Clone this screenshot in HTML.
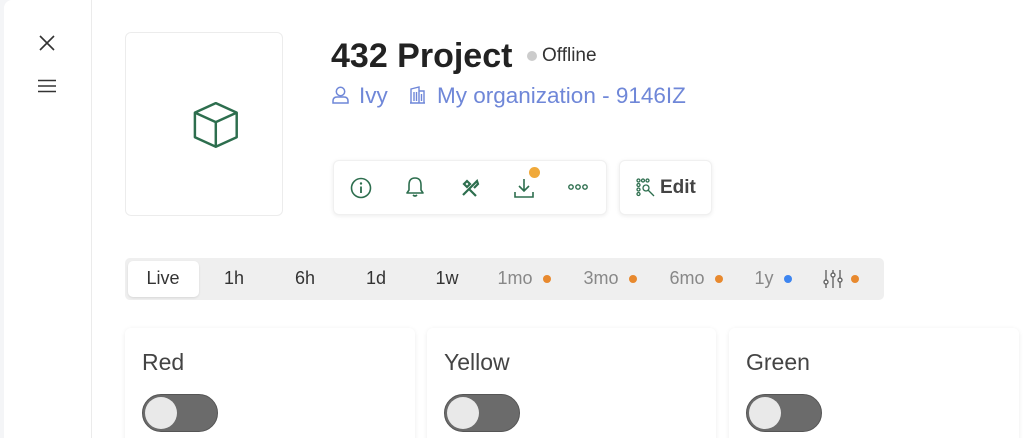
<!DOCTYPE html>
<html><head><style>
*{box-sizing:border-box;margin:0;padding:0}
html,body{width:1024px;height:438px;overflow:hidden}
body{background:#f4f5f7;font-family:"Liberation Sans",sans-serif;position:relative}
.side{position:absolute;left:4px;top:0;width:88px;height:438px;background:#fff;border-right:1px solid #ebebeb;border-top-left-radius:8px}
.main{position:absolute;left:92px;top:0;right:0;height:438px;background:#fff}
.abs{position:absolute}
.box{position:absolute;background:#fff;border:1px solid #ececec;border-radius:6px}
.shadow{box-shadow:0 1px 4px rgba(0,0,0,.08);border:1px solid #f0f0f0}
.tab{position:absolute;top:268px;font-size:18px;color:#333;transform:translateX(-50%)}
.tab.g{color:#888}
.dot{position:absolute;width:8px;height:8px;border-radius:50%;top:275px}
.card{position:absolute;top:328px;height:120px;background:#fff;border-radius:6px;box-shadow:0 1px 5px rgba(0,0,0,.08)}
.card .t{position:absolute;left:17px;top:21px;font-size:23px;color:#444}
.tg{position:absolute;left:17px;top:66px;width:76px;height:38px;border-radius:19px;background:#6b6b6b;border:1px solid #555}
.tg:after{content:"";position:absolute;left:2px;top:2px;width:32px;height:32px;border-radius:50%;background:#e9e9e9}
</style></head><body>
<div class="side">
<svg class="abs" style="left:34px;top:34px" width="18" height="18" viewBox="0 0 18 18"><path d="M2 2L16 16M16 2L2 16" stroke="#333" stroke-width="1.6"/></svg>
<svg class="abs" style="left:34px;top:79px" width="18" height="14" viewBox="0 0 18 14"><path d="M0 1.5H18M0 7H18M0 12.5H18" stroke="#333" stroke-width="1.6"/></svg>
</div>
<div class="main"></div>
<div class="box" style="left:125px;top:32px;width:158px;height:184px">
<svg class="abs" style="left:66px;top:69px" width="48" height="48" viewBox="0 0 48 48"><path d="M2 8L24 -2 46 8 46 34 24 44 2 34Z M2 8L24 18 46 8 M24 18V44" transform="translate(1,3) scale(0.95)" fill="none" stroke="#2d6e4e" stroke-width="2.6" stroke-linejoin="round"/></svg>
</div>
<div class="abs" style="left:331px;top:37px;font-size:34px;font-weight:bold;color:#222">432 Project</div>
<div class="abs" style="left:527px;top:51px;width:10px;height:10px;border-radius:50%;background:#ccc"></div>
<div class="abs" style="left:542px;top:45px;font-size:19px;color:#333">Offline</div>
<svg class="abs" style="left:332px;top:86px" width="17" height="18" viewBox="0 0 17 18"><circle cx="8.5" cy="5.5" r="4.2" fill="none" stroke="#6f87d8" stroke-width="1.5"/><path d="M1 17V15Q1 11 5 11H12Q16 11 16 15V17Z" fill="none" stroke="#6f87d8" stroke-width="1.5"/></svg>
<div class="abs" style="left:359px;top:83px;font-size:22.5px;color:#6f87d8">Ivy</div>
<svg class="abs" style="left:409px;top:86px" width="17" height="18" viewBox="0 0 17 18"><path d="M2 17V3L10 1V17M10 5H15V17M1 17H16M5 6V15M7.5 6V15M12.5 8V15" fill="none" stroke="#6f87d8" stroke-width="1.4"/></svg>
<div class="abs" style="left:437px;top:83px;font-size:22.5px;color:#6f87d8">My organization - 9146IZ</div>
<div class="box shadow" style="left:333px;top:160px;width:274px;height:55px"></div>
<svg class="abs" style="left:350px;top:177px" width="22" height="22" viewBox="0 0 22 22"><circle cx="11" cy="11" r="9.5" fill="none" stroke="#2d6e4e" stroke-width="1.6"/><path d="M11 9.5V16" stroke="#2d6e4e" stroke-width="1.8"/><circle cx="11" cy="6.5" r="1.2" fill="#2d6e4e"/></svg>
<svg class="abs" style="left:405px;top:176px" width="20" height="22" viewBox="0 0 20 22"><path d="M10 2Q4 2 4 9V14L2 17H18L16 14V9Q16 2 10 2ZM8 19Q10 21 12 19" fill="none" stroke="#2d6e4e" stroke-width="1.6" stroke-linejoin="round"/></svg>
<svg class="abs" style="left:460px;top:178px" width="20" height="20" viewBox="0 0 20 20"><path d="M3 17L12 8M7 3L4 6 7 9 10 6ZM9 11L16 18M12 8L17 3 18 6 14 10" fill="none" stroke="#2d6e4e" stroke-width="2.2"/></svg>
<svg class="abs" style="left:513px;top:177px" width="22" height="22" viewBox="0 0 22 22"><path d="M11 2V14M6 9L11 14 16 9M2 15V20H20V15" fill="none" stroke="#2d6e4e" stroke-width="1.6"/></svg>
<div class="abs" style="left:529px;top:167px;width:11px;height:11px;border-radius:50%;background:#f0a93a"></div>
<svg class="abs" style="left:568px;top:183px" width="20" height="8" viewBox="0 0 20 8"><circle cx="3" cy="4" r="2.2" fill="none" stroke="#2d6e4e" stroke-width="1.4"/><circle cx="10" cy="4" r="2.2" fill="none" stroke="#2d6e4e" stroke-width="1.4"/><circle cx="17" cy="4" r="2.2" fill="none" stroke="#2d6e4e" stroke-width="1.4"/></svg>
<div class="box shadow" style="left:619px;top:160px;width:93px;height:55px"></div>
<svg class="abs" style="left:636px;top:178px" width="20" height="20" viewBox="0 0 20 20"><g fill="none" stroke="#2d6e4e" stroke-width="1.3"><circle cx="2.5" cy="2.5" r="1.5"/><circle cx="7" cy="2.5" r="1.5"/><circle cx="11.5" cy="2.5" r="1.5"/><circle cx="2.5" cy="7" r="1.5"/><circle cx="2.5" cy="11.5" r="1.5"/><circle cx="2.5" cy="16" r="1.5"/><circle cx="10" cy="10" r="3"/><path d="M12 12L18 18"/></g></svg>
<div class="abs" style="left:660px;top:177px;font-size:19px;font-weight:bold;color:#444">Edit</div>
<div class="abs" style="left:125px;top:258px;width:759px;height:42px;background:#efefef;border-radius:5px"></div>
<div class="abs" style="left:128px;top:261px;width:71px;height:36px;background:#fff;border-radius:5px;box-shadow:0 1px 2px rgba(0,0,0,.1)"></div>
<div class="tab" style="left:163px">Live</div>
<div class="tab" style="left:234px">1h</div>
<div class="tab" style="left:305px">6h</div>
<div class="tab" style="left:376px">1d</div>
<div class="tab" style="left:447px">1w</div>
<div class="tab g" style="left:515px">1mo</div><div class="dot" style="left:543px;background:#e8892e"></div>
<div class="tab g" style="left:601px">3mo</div><div class="dot" style="left:629px;background:#e8892e"></div>
<div class="tab g" style="left:687px">6mo</div><div class="dot" style="left:715px;background:#e8892e"></div>
<div class="tab g" style="left:764px">1y</div><div class="dot" style="left:784px;background:#3d85f0"></div>
<svg class="abs" style="left:823px;top:269px" width="20" height="20" viewBox="0 0 20 20"><g stroke="#666" stroke-width="1.4" fill="#fff"><path d="M3 1V19M10 1V19M17 1V19"/><circle cx="3" cy="13" r="2"/><circle cx="10" cy="6" r="2"/><circle cx="17" cy="11" r="2"/></g></svg>
<div class="dot" style="left:851px;background:#e8892e"></div>
<div class="card" style="left:125px;width:290px"><div class="t">Red</div><div class="tg"></div></div>
<div class="card" style="left:427px;width:289px"><div class="t">Yellow</div><div class="tg"></div></div>
<div class="card" style="left:729px;width:290px"><div class="t">Green</div><div class="tg"></div></div>
</body></html>
